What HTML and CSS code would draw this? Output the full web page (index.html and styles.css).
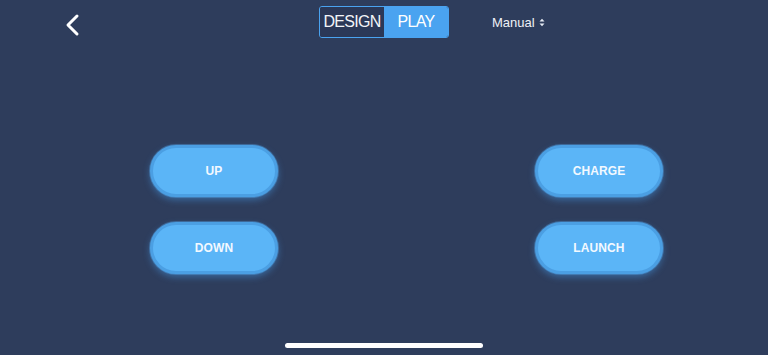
FILE: index.html
```html
<!DOCTYPE html>
<html>
<head>
<meta charset="utf-8">
<link rel="stylesheet" href="styles.css">
</head>
<body>
<div class="screen">
  <header class="topbar">
    <button class="back" aria-label="Back">
      <svg width="16" height="24" viewBox="0 0 16 24"><path d="M12 3 L3 12 L12 21" fill="none" stroke="#ffffff" stroke-width="3" stroke-linecap="round" stroke-linejoin="round"/></svg>
    </button>
    <div class="segmented">
      <span class="seg seg-off">DESIGN</span>
      <span class="seg seg-on">PLAY</span>
    </div>
    <div class="mode">Manual <span class="updown">
      <svg width="6" height="9" viewBox="0 0 6 9"><path d="M0.5 3.6 L3 0.8 L5.5 3.6 Z M0.5 5.4 L3 8.2 L5.5 5.4 Z" fill="#e6ebf3"/></svg>
    </span></div>
  </header>
  <main class="pad">
    <button class="ctl">UP</button>
    <button class="ctl">CHARGE</button>
    <button class="ctl">DOWN</button>
    <button class="ctl">LAUNCH</button>
  </main>
  <div class="home-indicator"></div>
</div>
</body>
</html>
```
FILE: styles.css
```css
* { box-sizing: border-box; }
html, body { margin: 0; padding: 0; }
body {
  background: #2e3d5c;
  font-family: "Liberation Sans", Arial, sans-serif;
  color: #ffffff;
}
.screen {
  position: relative;
  width: 768px;
  height: 355px;
  overflow: hidden;
  background: #2e3d5c;
}
.topbar {
  display: flex;
  align-items: flex-start;
  height: 44px;
  padding-left: 65px;
}
.back {
  margin-top: 13px;
  width: 16px;
  height: 24px;
  padding: 0;
  border: 0;
  background: transparent;
  display: flex;
}
.segmented {
  margin-top: 6px;
  margin-left: 238px;
  display: flex;
  height: 32px;
  width: 130px;
  border: 1px solid #4aa3f0;
  border-radius: 3px;
  overflow: hidden;
}
.seg {
  display: flex;
  align-items: center;
  justify-content: center;
  font-size: 16px;
  letter-spacing: -0.7px;
}
.seg-off {
  width: 64px;
  background: #2b3857;
  color: #f2f4f8;
}
.seg-on {
  flex: 1;
  background: #4aa3f0;
  color: #ffffff;
}
.mode {
  margin-top: 15px;
  margin-left: 43px;
  font-size: 13px;
  color: #eef1f6;
  display: flex;
  align-items: center;
  gap: 4px;
}
.updown { display: flex; }
.pad {
  display: grid;
  grid-template-columns: 128px 128px;
  column-gap: 257px;
  row-gap: 25px;
  padding-top: 101px;
  padding-left: 150px;
}
.ctl {
  height: 52px;
  border-radius: 26px;
  background: #5bb5f7;
  border: 3px solid #4b9fe3;
  box-shadow: 0 0 0 1px rgba(90,175,245,0.35), 0 3px 7px rgba(70,160,240,0.45);
  color: #f3f9ff;
  font-family: "Liberation Sans", Arial, sans-serif;
  font-weight: bold;
  font-size: 12px;
  letter-spacing: 0.1px;
  padding: 0;
}
.home-indicator {
  position: absolute;
  left: 285px;
  top: 343px;
  width: 198px;
  height: 5px;
  border-radius: 3px;
  background: #ffffff;
}
```
